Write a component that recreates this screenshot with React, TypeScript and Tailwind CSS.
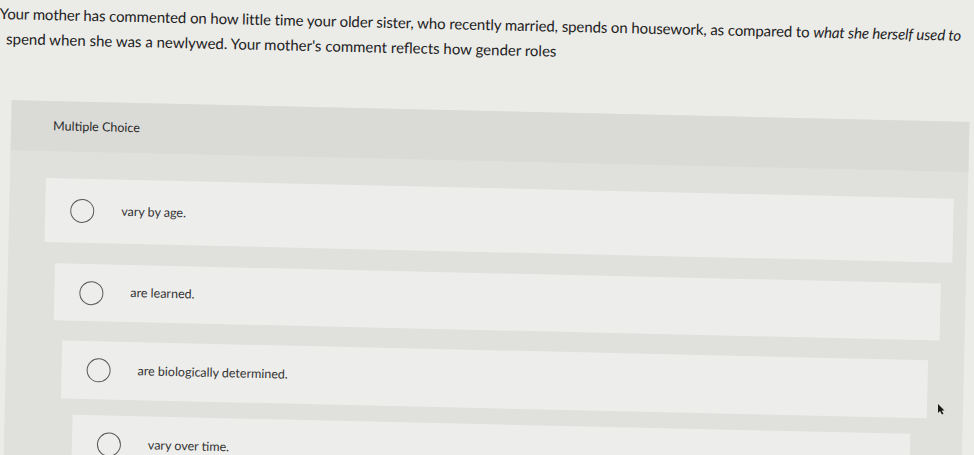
import React from 'react';

interface Choice {
    id: string;
    label: string;
    box: string;
}

// the photo is shot at an angle, so each row sits a little further in
const choices: Choice[] = [
    { id: 'a', label: 'vary by age.', box: 'ml-[36px] mr-[14px] h-[64px] mt-[27px]' },
    { id: 'b', label: 'are learned.', box: 'ml-[47px] mr-[25px] h-[57px] mt-[21px]' },
    { id: 'c', label: 'are biologically determined.', box: 'ml-[56px] mr-[36px] h-[58px] mt-[20px]' },
    { id: 'd', label: 'vary over time.', box: 'ml-[68px] mr-[52px] h-[58px] mt-[16px]' },
];

export default function App() {
    return (
        <div className="relative w-[974px] h-[455px] overflow-hidden bg-[#ebebe8] text-[#222]" style={{ fontFamily: 'Lato, "Open Sans", sans-serif' }}>
            <div className="origin-top-left rotate-[1.3deg]">
                {/* Question stem */}
                <div className="pt-[1px] text-[15px] leading-[25px] whitespace-nowrap">
                    <p className="tracking-[-0.1px]">
                        Your mother has commented on how little time your older sister, who recently married, spends on housework, as compared to <span className="italic">what she herself used to</span>
                    </p>
                    <p className="pl-[7px]">
                        spend when she was a newlywed. Your mother's comment reflects how gender roles
                    </p>
                </div>

                {/* Answer panel */}
                <div className="mt-[49px] ml-[14px] w-[958px] h-[420px] bg-[#e0e0dd]">
                    <div className="h-[50px] flex items-center pl-[42px] bg-[#dadad7] text-[12.5px] text-[#2a2a2a]">
                        Multiple Choice
                    </div>

                    {choices.map((c) => (
                        <div key={c.id} className={`flex items-center pl-[25px] bg-[#ededeb] ${c.box}`}>
                            <span className="w-[24px] h-[24px] rounded-full border-[1.5px] border-[#5a5a5a] flex-shrink-0" />
                            <span className="ml-[27px] text-[12.5px] text-[#333]">{c.label}</span>
                        </div>
                    ))}
                </div>
            </div>

            {/* mouse pointer */}
            <svg className="absolute left-[937px] top-[403px]" width="8" height="12" viewBox="0 0 8 12">
                <path d="M1 1 L1 10 L3 8 L5 11.5 L6.5 10.8 L4.6 7.6 L7.5 7.4 Z" fill="#1a1a1a" />
            </svg>
        </div>
    );
}
